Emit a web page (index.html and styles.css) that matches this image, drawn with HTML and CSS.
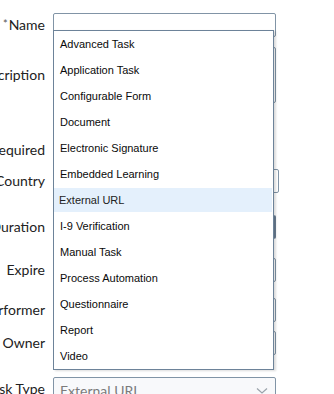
FILE: index.html
```html
<!DOCTYPE html>
<html>
<head>
<meta charset="utf-8">
<link rel="stylesheet" href="styles.css">
</head>
<body>
<div class="page">
  <form class="form">
    <div class="row row-name">
      <div class="label"><span class="req">*</span>Name</div>
      <div class="field"><div class="input"></div></div>
    </div>
    <div class="row row-desc">
      <div class="label">Description</div>
      <div class="field"><div class="input textarea"><span class="grip"></span></div></div>
    </div>
    <div class="row row-required">
      <div class="label">Is Required</div>
      <div class="field"></div>
    </div>
    <div class="row row-country">
      <div class="label">Country</div>
      <div class="field"><div class="input wide"></div></div>
    </div>
    <div class="row row-duration">
      <div class="label">Due Duration</div>
      <div class="field"><div class="input dark"></div></div>
    </div>
    <div class="row row-expire">
      <div class="label">Expire</div>
      <div class="field"><div class="input"></div></div>
    </div>
    <div class="row row-performer">
      <div class="label">Performer</div>
      <div class="field"><div class="input"></div></div>
    </div>
    <div class="row row-owner">
      <div class="label">Owner</div>
      <div class="field"><div class="input"></div></div>
    </div>
    <div class="row row-type">
      <div class="label">Task Type</div>
      <div class="field">
        <div class="input select">
          <span class="placeholder">External URL</span>
          <svg class="chev" width="12" height="8" viewBox="0 0 12 8"><path d="M1 1.5 L6 6 L11 1.5" fill="none" stroke="#9aa3ab" stroke-width="1.2"/></svg>
        </div>
      </div>
    </div>
  </form>

  <ul class="menu">
    <li class="item">Advanced Task</li>
    <li class="item">Application Task</li>
    <li class="item">Configurable Form</li>
    <li class="item">Document</li>
    <li class="item">Electronic Signature</li>
    <li class="item">Embedded Learning</li>
    <li class="item active">External URL</li>
    <li class="item">I-9 Verification</li>
    <li class="item">Manual Task</li>
    <li class="item">Process Automation</li>
    <li class="item">Questionnaire</li>
    <li class="item">Report</li>
    <li class="item">Video</li>
  </ul>
</div>
</body>
</html>
```
FILE: styles.css
```css
html, body {
  margin: 0;
  padding: 0;
  background: #fff;
  overflow: hidden;
}
.page {
  position: relative;
  width: 334px;
  height: 394px;
  overflow: hidden;
}
.form {
  display: flex;
  flex-direction: column;
  padding-top: 13px;
}
.row {
  display: flex;
  align-items: center;
  gap: 8px;
  height: 24px;
}
.row-desc { margin-top: 10px; height: 56px; }
.row-required { margin-top: 35px; }
.row-country { margin-top: 7px; }
.row-duration { margin-top: 22px; }
.row-expire { margin-top: 19px; }
.row-performer { margin-top: 16px; }
.row-owner { margin-top: 9px; }
.row-type { margin-top: 22px; }

.label {
  width: 45px;
  flex: none;
  display: flex;
  justify-content: flex-end;
  white-space: nowrap;
  font-family: Lato, "Open Sans", sans-serif;
  font-size: 14px;
  color: #222;
  line-height: 18px;
}
.req {
  font-size: 11px;
  color: #555;
  margin-right: 1px;
  position: relative;
  top: -1px;
}
.field {
  width: 223px;
  flex: none;
  height: 100%;
}
.input {
  box-sizing: border-box;
  height: 24px;
  border: 1px solid #8194a6;
  border-radius: 2px;
  background: #fff;
}
.input.wide { width: 226px; }
.input.dark { border-right: 2px solid #6a7e92; }
.textarea {
  height: 56px;
  position: relative;
}
.grip {
  position: absolute;
  right: 1px;
  bottom: 5px;
  width: 1px;
  height: 5px;
  border-right: 1px dotted #555;
}
.select {
  background: #f8f9fb;
  display: flex;
  align-items: center;
  justify-content: space-between;
  padding: 0 7px 0 6px;
  height: 26px;
}
.placeholder {
  font-family: Lato, "Open Sans", sans-serif;
  font-size: 14px;
  color: #7b7b7b;
}
.chev { margin-top: 2px; }

.menu {
  position: absolute;
  left: 53px;
  top: 30px;
  width: 221px;
  box-sizing: border-box;
  margin: 0;
  padding: 0;
  list-style: none;
  background: #fff;
  border: 1px solid #6d8399;
  box-shadow: 2px 1px 2px rgba(0, 0, 0, 0.14);
  display: flex;
  flex-direction: column;
}
.item {
  height: 24px;
  margin: 1px 1px 1px 0;
  padding-left: 6px;
  display: flex;
  align-items: center;
  font-family: "Liberation Sans", Arial, sans-serif;
  font-size: 11px;
  color: #0a0a0a;
}
.item.active {
  background: #e4f0fc;
  padding-left: 5px;
  color: #222;
}
```
